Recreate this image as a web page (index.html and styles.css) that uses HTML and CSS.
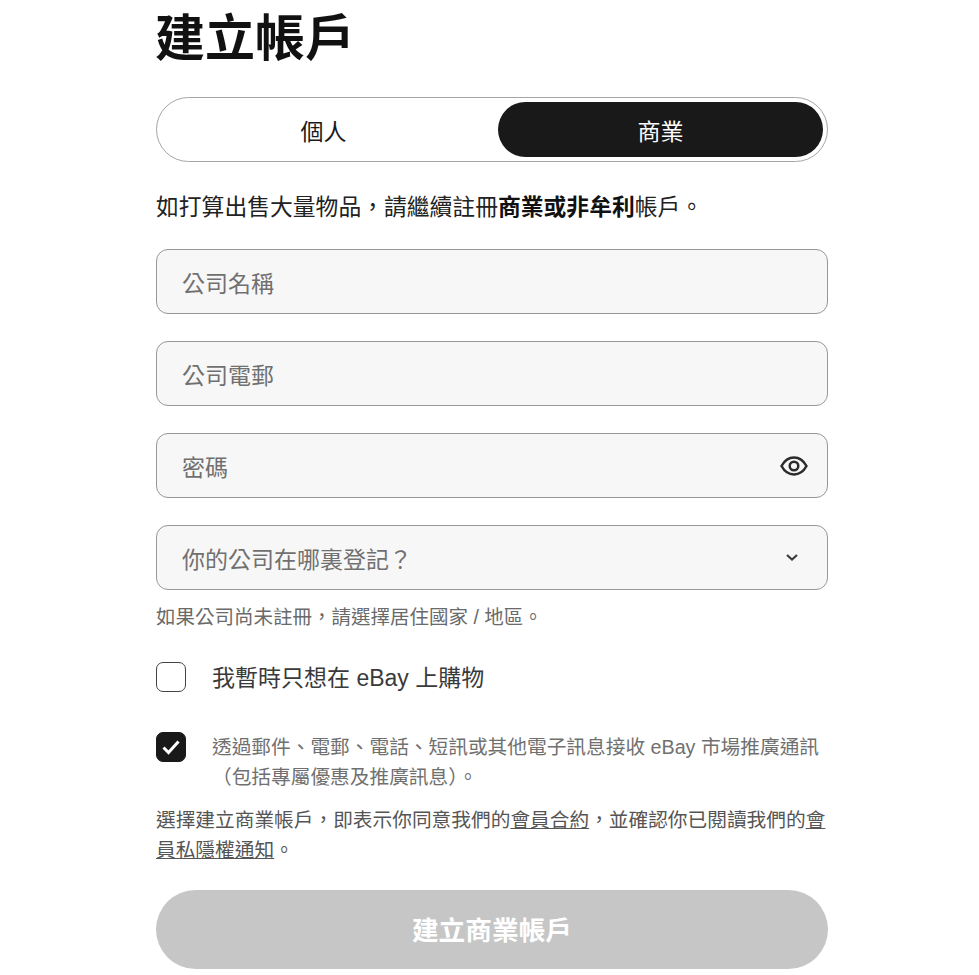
FILE: index.html
```html
<!DOCTYPE html>
<html>
<head>
  <title>建立帳戶</title>
  <link rel="stylesheet" href="styles.css">
</head>
<body>
  <div class="signup">
    <h1>建立帳戶</h1>

    <div class="toggle">
      <a href="#">個人</a>
      <a href="#" class="active">商業</a>
    </div>

    <p class="intro">如打算出售大量物品，請繼續註冊<b>商業或非牟利</b>帳戶。</p>

    <div class="field"><span>公司名稱</span></div>
    <div class="field"><span>公司電郵</span></div>
    <div class="field">
      <span>密碼</span>
      <svg class="eye" width="28" height="20" viewBox="0 0 28 20" fill="none" stroke="#2b2b2b" stroke-width="2.5">
        <path d="M1.5 10C4.5 4.5 9 1.5 14 1.5S23.5 4.5 26.5 10C23.5 15.5 19 18.5 14 18.5S4.5 15.5 1.5 10Z"/>
        <circle cx="14" cy="10" r="4.3"/>
      </svg>
    </div>
    <div class="field">
      <span>你的公司在哪裏登記？</span>
      <svg class="chevron" width="14" height="9" viewBox="0 0 14 9" fill="none" stroke="#3c3c3c" stroke-width="2.2">
        <path d="M2 2L7 6.5L12 2"/>
      </svg>
    </div>
    <p class="hint">如果公司尚未註冊，請選擇居住國家 / 地區。</p>

    <label class="check-row shop-only">
      <span class="box"></span>
      <span class="label">我暫時只想在 eBay 上購物</span>
    </label>

    <label class="check-row marketing">
      <span class="box checked">
        <svg width="20" height="16" viewBox="0 0 20 16" fill="none" stroke="#fff" stroke-width="3">
          <path d="M2.5 8.5L7.5 13.5L17.5 2.5"/>
        </svg>
      </span>
      <span>透過郵件、電郵、電話、短訊或其他電子訊息接收 eBay 市場推廣通訊（包括專屬優惠及推廣訊息）。</span>
    </label>

    <p class="legal">選擇建立商業帳戶，即表示你同意我們的<a href="#">會員合約</a>，並確認你已閱讀我們的<a href="#">會員私隱權通知</a>。</p>

    <button class="submit">建立商業帳戶</button>
  </div>
</body>
</html>
```

FILE: styles.css
```css
/* Global styles */
body {
  font-family: "Liberation Sans", "Noto Sans CJK TC", sans-serif;
  margin: 0;
  padding: 0;
  background-color: #fff;
  color: #191919;
}

.signup {
  width: 672px;
  margin-left: 156px;
}

h1 {
  font-size: 50px;
  line-height: 60px;
  font-weight: bold;
  margin: 0 0 0 -1px;
  padding-top: 9px;
  color: #111;
}

/* Account type toggle */
.toggle {
  display: flex;
  height: 65px;
  box-sizing: border-box;
  margin-top: 28px;
  padding: 4px;
  border: 1.5px solid #a5a5a5;
  border-radius: 33px;
}

.toggle a {
  flex: 1;
  display: flex;
  align-items: center;
  justify-content: center;
  padding-right: 12px;
  font-size: 23px;
  color: #191919;
  text-decoration: none;
  border-radius: 28px;
}

.toggle a.active {
  flex: none;
  width: 325px;
  padding-right: 0;
  background-color: #191919;
  color: #fff;
}

.intro {
  font-size: 22.8px;
  line-height: 30px;
  margin: 30px 0 27px;
  color: #222;
}

.intro b {
  color: #111;
}

/* Form fields */
.field {
  display: flex;
  align-items: center;
  justify-content: space-between;
  height: 65px;
  box-sizing: border-box;
  margin-bottom: 27px;
  padding: 0 19px 0 25px;
  background-color: #f7f7f7;
  border: 1.5px solid #979797;
  border-radius: 12px;
  font-size: 23px;
  color: #707070;
}

.field .chevron {
  margin-right: 9px;
}

.hint {
  font-size: 19.5px;
  line-height: 28px;
  margin: -14px 0 0;
  color: #6a6a6a;
}

/* Checkboxes */
.check-row {
  display: flex;
  gap: 26px;
}

.box {
  flex: none;
  display: flex;
  align-items: center;
  justify-content: center;
  width: 30px;
  height: 30px;
  box-sizing: border-box;
  border: 1.5px solid #444;
  border-radius: 7px;
}

.box.checked {
  background-color: #191919;
  border-color: #191919;
}

.shop-only {
  margin-top: 31px;
  font-size: 23px;
  line-height: 30px;
  color: #3a3a3a;
}

.shop-only .label {
  padding-top: 1px;
}

.marketing {
  margin-top: 39px;
  font-size: 19.7px;
  line-height: 30px;
  color: #707070;
}

.legal {
  font-size: 19.7px;
  line-height: 30px;
  margin: 13px 0 0;
  color: #555;
}

.legal a {
  color: #555;
}

.submit {
  display: block;
  width: 100%;
  height: 79px;
  margin-top: 25px;
  padding-bottom: 4px;
  background-color: #c6c6c6;
  border: none;
  border-radius: 40px;
  font-family: inherit;
  font-size: 26.7px;
  font-weight: bold;
  color: #fff;
}
```
